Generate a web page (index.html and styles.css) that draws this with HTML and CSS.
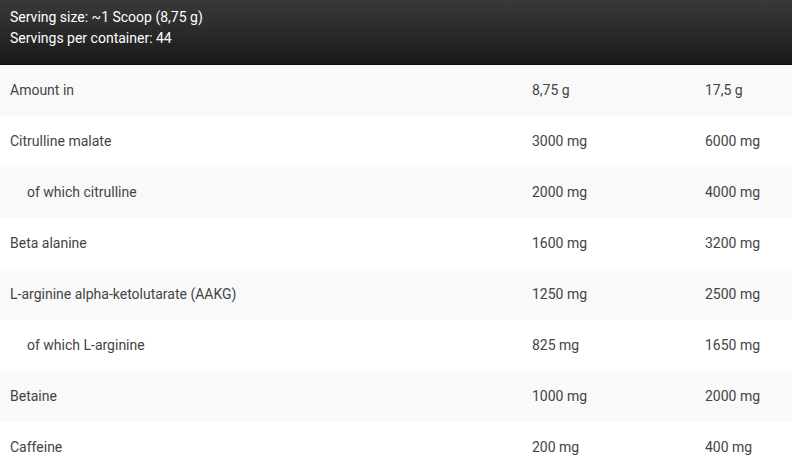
FILE: index.html
```html
<!DOCTYPE html>
<html>
<head>
<meta charset="utf-8">
<link rel="stylesheet" href="styles.css">
</head>
<body>
<div class="panel">
  <div class="head">
    <div class="head-line">Serving size: ~1 Scoop (8,75 g)</div>
    <div class="head-line">Servings per container: 44</div>
  </div>
  <div class="rows">
    <div class="row alt"><div class="cell">Amount in</div><div class="cell">8,75 g</div><div class="cell">17,5 g</div></div>
    <div class="row"><div class="cell">Citrulline malate</div><div class="cell">3000 mg</div><div class="cell">6000 mg</div></div>
    <div class="row alt"><div class="cell sub">of which citrulline</div><div class="cell">2000 mg</div><div class="cell">4000 mg</div></div>
    <div class="row"><div class="cell">Beta alanine</div><div class="cell">1600 mg</div><div class="cell">3200 mg</div></div>
    <div class="row alt"><div class="cell">L-arginine alpha-ketolutarate (AAKG)</div><div class="cell">1250 mg</div><div class="cell">2500 mg</div></div>
    <div class="row"><div class="cell sub">of which L-arginine</div><div class="cell">825 mg</div><div class="cell">1650 mg</div></div>
    <div class="row alt"><div class="cell">Betaine</div><div class="cell">1000 mg</div><div class="cell">2000 mg</div></div>
    <div class="row"><div class="cell">Caffeine</div><div class="cell">200 mg</div><div class="cell">400 mg</div></div>
  </div>
</div>
</body>
</html>
```
FILE: styles.css
```css
html, body {
  margin: 0;
  padding: 0;
  background: #ffffff;
}
body {
  font-family: Roboto, "Liberation Sans", sans-serif;
  font-size: 14px;
  color: #444444;
  overflow: hidden;
}
.head {
  height: 65px;
  box-sizing: border-box;
  padding: 7px 10px 0 10px;
  background: linear-gradient(to bottom, #393939 0%, #2a2a2a 50%, #191919 100%);
  border-bottom: 1px solid #0c0c0c;
  color: #ffffff;
  font-size: 14px;
  line-height: 21px;
}
.row {
  display: grid;
  grid-template-columns: 522px 173px 1fr;
  height: 51px;
  box-sizing: border-box;
  padding-bottom: 2px;
  align-items: center;
  background: #ffffff;
}
.row.alt {
  background: #f9f9f9;
}
.cell {
  padding-left: 10px;
  line-height: 20px;
}
.cell.sub {
  padding-left: 27px;
}
```
